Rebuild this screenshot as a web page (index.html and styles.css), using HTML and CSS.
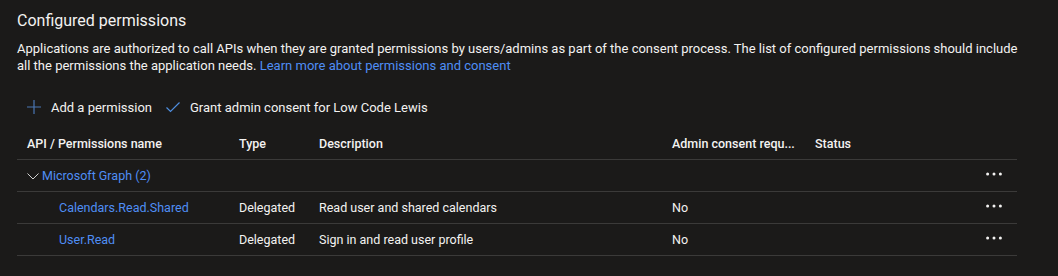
FILE: index.html
```html
<!DOCTYPE html>
<html>
<head>
<meta charset="utf-8">
<link rel="stylesheet" href="styles.css">
</head>
<body>
<div class="page">
  <h2 class="title">Configured permissions</h2>
  <p class="intro">Applications are authorized to call APIs when they are granted permissions by users/admins as part of the consent process. The list of configured permissions should include all the permissions the application needs. <a class="link" href="#">Learn more about permissions and consent</a></p>
  <div class="toolbar">
    <button class="tool">
      <svg class="icon" width="16" height="16" viewBox="0 0 16 16"><path d="M8 1v14M1 8h14" stroke="#4a76b4" stroke-width="1.2" fill="none"/></svg>
      <span>Add a permission</span>
    </button>
    <button class="tool">
      <svg class="icon" width="16" height="16" viewBox="0 0 16 16"><path d="M1.5 8.5l4 4 9-9" stroke="#4f8fe0" stroke-width="1.2" fill="none"/></svg>
      <span>Grant admin consent for Low Code Lewis</span>
    </button>
  </div>
  <div class="grid">
    <div class="row head">
      <div class="cell">API / Permissions name</div>
      <div class="cell">Type</div>
      <div class="cell">Description</div>
      <div class="cell">Admin consent requ...</div>
      <div class="cell">Status</div>
      <div class="cell"></div>
    </div>
    <div class="row group">
      <div class="cell groupname"><svg class="chev" width="12" height="12" viewBox="0 0 12 12"><path d="M0.5 3.5l5.5 5.5 5.5-5.5" stroke="#d0d0d0" stroke-width="1" fill="none"/></svg><a class="link" href="#">Microsoft Graph (2)</a></div>
      <div class="cell"></div>
      <div class="cell"></div>
      <div class="cell"></div>
      <div class="cell"></div>
      <div class="cell more"><svg width="16" height="4" viewBox="0 0 16 4"><circle cx="1.6" cy="2" r="1.5" fill="#f3f2f1"/><circle cx="8" cy="2" r="1.5" fill="#f3f2f1"/><circle cx="14.4" cy="2" r="1.5" fill="#f3f2f1"/></svg></div>
    </div>
    <div class="row">
      <div class="cell perm"><a class="link" href="#">Calendars.Read.Shared</a></div>
      <div class="cell">Delegated</div>
      <div class="cell">Read user and shared calendars</div>
      <div class="cell">No</div>
      <div class="cell"></div>
      <div class="cell more"><svg width="16" height="4" viewBox="0 0 16 4"><circle cx="1.6" cy="2" r="1.5" fill="#f3f2f1"/><circle cx="8" cy="2" r="1.5" fill="#f3f2f1"/><circle cx="14.4" cy="2" r="1.5" fill="#f3f2f1"/></svg></div>
    </div>
    <div class="row">
      <div class="cell perm"><a class="link" href="#">User.Read</a></div>
      <div class="cell">Delegated</div>
      <div class="cell">Sign in and read user profile</div>
      <div class="cell">No</div>
      <div class="cell"></div>
      <div class="cell more"><svg width="16" height="4" viewBox="0 0 16 4"><circle cx="1.6" cy="2" r="1.5" fill="#f3f2f1"/><circle cx="8" cy="2" r="1.5" fill="#f3f2f1"/><circle cx="14.4" cy="2" r="1.5" fill="#f3f2f1"/></svg></div>
    </div>
  </div>
</div>
</body>
</html>
```
FILE: styles.css
```css
html, body {
  margin: 0;
  background: #1b1a19;
}
body {
  font-family: Roboto, "Noto Sans", sans-serif;
  color: #f3f2f1;
  font-size: 13px;
}
.page {
  padding: 10px 0 0 17px;
  width: 1000px;
}
.title {
  margin: 0;
  font-size: 16px;
  font-weight: 400;
  line-height: 22px;
}
.intro {
  margin: 8px 0 0;
  line-height: 17px;
  width: 1008px;
}
.link {
  color: #4f8ef5;
  text-decoration: none;
}
.toolbar {
  display: flex;
  align-items: center;
  height: 36px;
  margin-top: 15px;
  padding-left: 9px;
  gap: 13px;
}
.tool {
  display: flex;
  align-items: center;
  gap: 9px;
  background: none;
  border: 0;
  padding: 0;
  color: #f3f2f1;
  font: inherit;
}
.icon { flex: none; }
.grid {
  margin-top: 2px;
  font-size: 12.5px;
}
.row {
  display: grid;
  grid-template-columns: 212px 80px 353px 143px 1fr 31px;
  height: 31px;
  align-items: center;
  border-bottom: 1px solid #3b3a39;
  padding-left: 10px;
}
.row.head {
  font-weight: 500;
  height: 32px;
}
.cell {
  white-space: nowrap;
}
.groupname {
  display: flex;
  align-items: center;
  gap: 3px;
}
.perm {
  padding-left: 32px;
}
.more {
  display: flex;
  align-items: center;
}
.more svg { margin-bottom: 4px; }
```
